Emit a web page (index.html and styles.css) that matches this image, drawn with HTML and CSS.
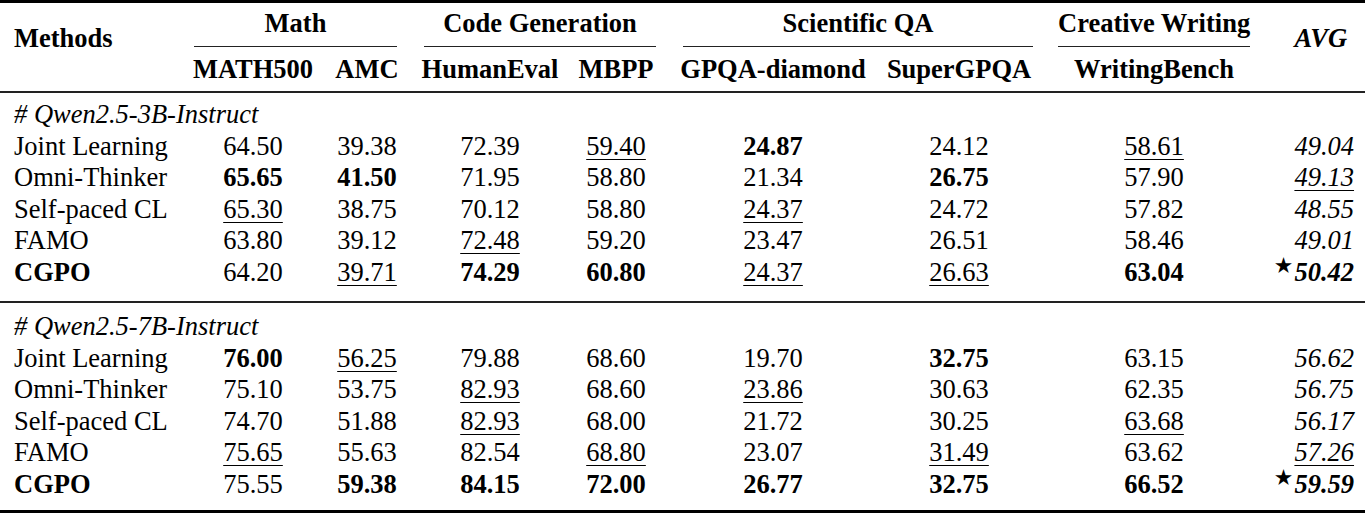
FILE: index.html
```html
<!DOCTYPE html>
<html lang="en">
<head>
<meta charset="utf-8">
<title>Results table</title>
<link rel="stylesheet" href="styles.css">
</head>
<body>
<table class="res">
  <colgroup>
    <col class="c0"><col class="c1"><col class="c2"><col class="c3"><col class="c4"><col class="c5"><col class="c6"><col class="c7"><col class="c8">
  </colgroup>
  <thead>
    <tr class="h1">
      <th class="meth" rowspan="2">Methods</th>
      <th colspan="2"><div class="grp g-math">Math</div></th>
      <th colspan="2"><div class="grp g-code">Code Generation</div></th>
      <th colspan="2"><div class="grp g-sci">Scientific QA</div></th>
      <th><div class="grp g-cw">Creative Writing</div></th>
      <th class="avgh" rowspan="2">AVG</th>
    </tr>
    <tr class="h2">
      <th>MATH500</th><th>AMC</th><th>HumanEval</th><th>MBPP</th><th>GPQA-diamond</th><th>SuperGPQA</th><th>WritingBench</th>
    </tr>
  </thead>
  <tbody class="grp1">
    <tr class="lbl"><td colspan="9"># Qwen2.5-3B-Instruct</td></tr>
    <tr><td class="m">Joint Learning</td><td>64.50</td><td>39.38</td><td>72.39</td><td><u>59.40</u></td><td><b>24.87</b></td><td>24.12</td><td><u>58.61</u></td><td class="avg">49.04</td></tr>
    <tr><td class="m">Omni-Thinker</td><td><b>65.65</b></td><td><b>41.50</b></td><td>71.95</td><td>58.80</td><td>21.34</td><td><b>26.75</b></td><td>57.90</td><td class="avg"><u>49.13</u></td></tr>
    <tr><td class="m">Self-paced CL</td><td><u>65.30</u></td><td>38.75</td><td>70.12</td><td>58.80</td><td><u>24.37</u></td><td>24.72</td><td>57.82</td><td class="avg">48.55</td></tr>
    <tr><td class="m">FAMO</td><td>63.80</td><td>39.12</td><td><u>72.48</u></td><td>59.20</td><td>23.47</td><td>26.51</td><td>58.46</td><td class="avg">49.01</td></tr>
    <tr class="last"><td class="m"><b>CGPO</b></td><td>64.20</td><td><u>39.71</u></td><td><b>74.29</b></td><td><b>60.80</b></td><td><u>24.37</u></td><td><u>26.63</u></td><td><b>63.04</b></td><td class="avg"><b class="best"><span class="star">★</span>50.42</b></td></tr>
  </tbody>
  <tbody class="grp2">
    <tr class="lbl"><td colspan="9"># Qwen2.5-7B-Instruct</td></tr>
    <tr><td class="m">Joint Learning</td><td><b>76.00</b></td><td><u>56.25</u></td><td>79.88</td><td>68.60</td><td>19.70</td><td><b>32.75</b></td><td>63.15</td><td class="avg">56.62</td></tr>
    <tr><td class="m">Omni-Thinker</td><td>75.10</td><td>53.75</td><td><u>82.93</u></td><td>68.60</td><td><u>23.86</u></td><td>30.63</td><td>62.35</td><td class="avg">56.75</td></tr>
    <tr><td class="m">Self-paced CL</td><td>74.70</td><td>51.88</td><td><u>82.93</u></td><td>68.00</td><td>21.72</td><td>30.25</td><td><u>63.68</u></td><td class="avg">56.17</td></tr>
    <tr><td class="m">FAMO</td><td><u>75.65</u></td><td>55.63</td><td>82.54</td><td><u>68.80</u></td><td>23.07</td><td><u>31.49</u></td><td>63.62</td><td class="avg"><u>57.26</u></td></tr>
    <tr class="last"><td class="m"><b>CGPO</b></td><td>75.55</td><td><b>59.38</b></td><td><b>84.15</b></td><td><b>72.00</b></td><td><b>26.77</b></td><td><b>32.75</b></td><td><b>66.52</b></td><td class="avg"><b class="best"><span class="star">★</span>59.59</b></td></tr>
  </tbody>
</table>
</body>
</html>
```

FILE: styles.css
```css
html, body {
  margin: 0;
  padding: 0;
  background: #ffffff;
}

.res {
  table-layout: fixed;
  width: 1365px;
  border-collapse: separate;
  border-spacing: 0;
  font-family: "Liberation Serif", "Times New Roman", serif;
  font-size: 26.5px;
  line-height: 31.5px;
  color: #000;
}

.c0 { width: 189px; }
.c1 { width: 128px; }
.c2 { width: 100px; }
.c3 { width: 146px; }
.c4 { width: 106px; }
.c5 { width: 208px; }
.c6 { width: 164px; }
.c7 { width: 226px; }
.c8 { width: 98px; }

.res th, .res td {
  padding: 0;
  text-align: center;
  white-space: nowrap;
  vertical-align: top;
}

.res th { font-weight: bold; }

/* header row 1 */
.h1 th {
  border-top: 3px solid #000;
  padding-top: 5px;
}
.grp {
  padding-bottom: 6px;
  border-bottom: 1px solid #222;
  text-align: center;
}
.g-math { margin: 0 20px 0 5px; }
.g-code { margin: 0 13px 0 7px; }
.g-sci { margin: 0 8px 0 14px; }
.g-cw { margin: 0 17px 0 17px; }

.meth {
  text-align: left !important;
  padding-left: 14px !important;
  padding-top: 20px !important;
  border-bottom: 2px solid #222;
}
.avgh {
  font-style: italic;
  text-align: right !important;
  padding-right: 18px !important;
  padding-top: 20px !important;
  border-bottom: 2px solid #222;
}

/* header row 2 */
.h2 th {
  padding-top: 7px;
  padding-bottom: 6px;
  border-bottom: 2px solid #222;
}

/* body */
.lbl td {
  text-align: left;
  font-style: italic;
  padding-left: 14px;
}
.grp1 .lbl td { padding-top: 6px; }
.grp2 .lbl td { padding-top: 8px; }

.res td.m {
  text-align: left;
  padding-left: 14px;
}
.res td.avg {
  text-align: right;
  padding-right: 11px;
  font-style: italic;
}

.grp1 .last td {
  padding-bottom: 13px;
  border-bottom: 2px solid #222;
}
.grp2 .last td {
  padding-bottom: 10px;
  border-bottom: 3px solid #000;
}

u {
  text-decoration: underline;
  text-decoration-thickness: 1px;
  text-underline-offset: 4px;
}

.best {
  position: relative;
}
.star {
  position: absolute;
  right: 100%;
  top: -7px;
  font-size: 19px;
  font-style: normal;
  margin-right: 2px;
}
```
